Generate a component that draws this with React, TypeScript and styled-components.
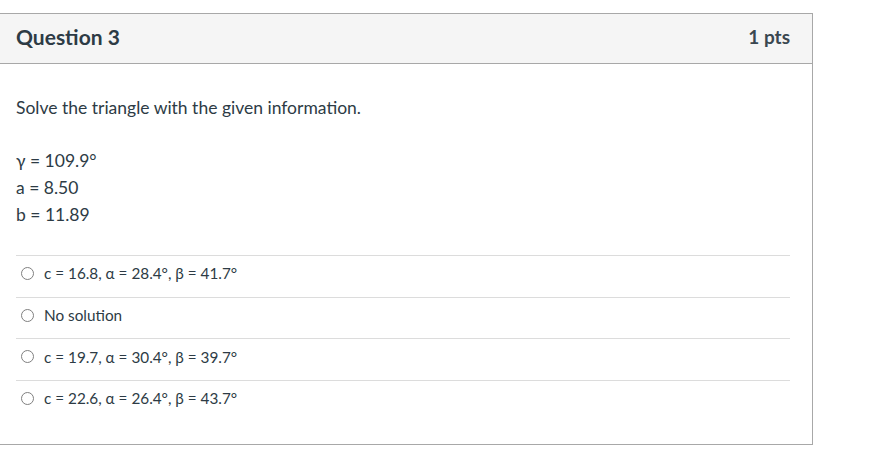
import React from 'react'
import styled, { createGlobalStyle } from 'styled-components'

const GlobalStyle = createGlobalStyle`
  html, body {
    margin: 0;
    padding: 0;
    background: #ffffff;
  }
  body {
    font-family: Lato, "Open Sans", "Liberation Sans", sans-serif;
    color: #2d3b45;
  }
`

const answers = [
  'c = 16.8, α = 28.4°, β = 41.7°',
  'No solution',
  'c = 19.7, α = 30.4°, β = 39.7°',
  'c = 22.6, α = 26.4°, β = 43.7°',
]

export default function App() {
  return (
    <>
      <GlobalStyle />
      <Card>
        <Header>
          <Title>Question 3</Title>
          <Points>1 pts</Points>
        </Header>
        <Body>
          <Prompt>Solve the triangle with the given information.</Prompt>
          <Givens>
            <div>γ = 109.9°</div>
            <div>a = 8.50</div>
            <div>b = 11.89</div>
          </Givens>
          <Answers>
            {answers.map((a) => (
              <Answer key={a}>
                <Radio />
                <AnswerText>{a}</AnswerText>
              </Answer>
            ))}
          </Answers>
        </Body>
      </Card>
    </>
  )
}

const Card = styled.section`
  margin-top: 13px;
  width: 812px;
  border: 1px solid #a8a8a8;
  border-left: none;
  background: #ffffff;
`

const Header = styled.header`
  height: 50px;
  display: flex;
  align-items: center;
  justify-content: space-between;
  padding: 0 22px 4px 16px;
  box-sizing: border-box;
  background: #f5f5f5;
  border-bottom: 1px solid #a8a8a8;
`

const Title = styled.h2`
  margin: 0;
  font-size: 21px;
  line-height: 26px;
  font-weight: 700;
  color: #2d3b45;
`

const Points = styled.div`
  font-size: 19px;
  line-height: 24px;
  font-weight: 700;
  color: #3a4750;
`

const Body = styled.div`
  padding: 31px 22px 22px 16px;
`

const Prompt = styled.p`
  margin: 0;
  font-size: 17.5px;
  line-height: 26px;
`

const Givens = styled.div`
  margin: 26px 0 27px;
  font-size: 17.5px;
  line-height: 27px;
`

const Answers = styled.div`
  display: flex;
  flex-direction: column;
`

const Answer = styled.label`
  display: flex;
  align-items: center;
  gap: 10px;
  height: 41.7px;
  padding-left: 5px;
  padding-bottom: 6px;
  box-sizing: border-box;
  border-top: 1px solid #dcdcdc;
`

const Radio = styled.span`
  width: 11px;
  height: 11px;
  border: 1px solid #808080;
  border-radius: 50%;
  flex-shrink: 0;
`

const AnswerText = styled.span`
  font-size: 15.3px;
  color: #2d3b45;
`
